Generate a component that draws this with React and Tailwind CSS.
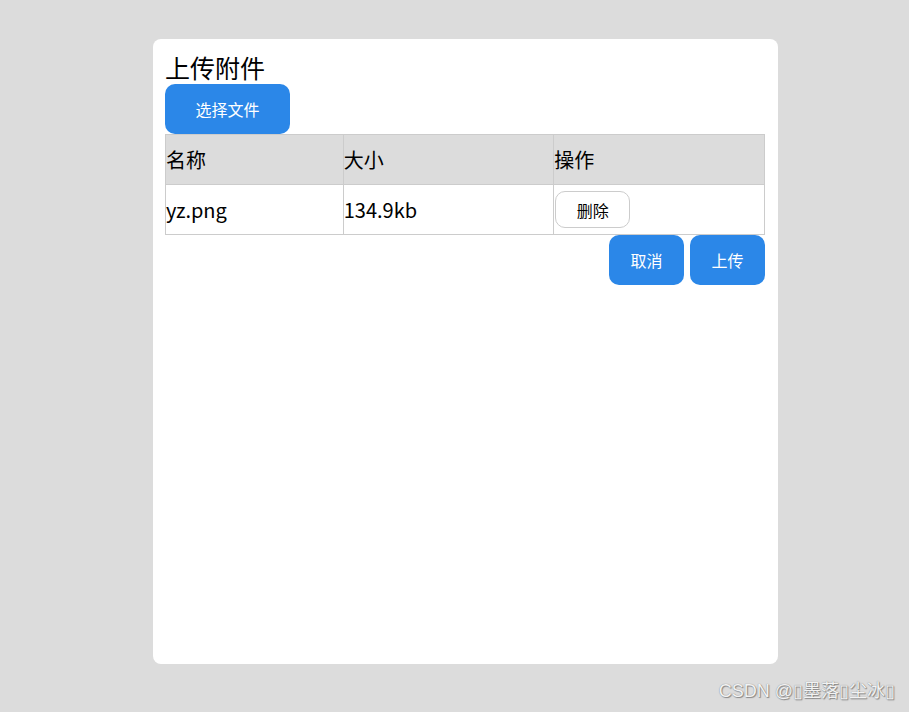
export default function App() {
  const font = { fontFamily: '"Noto Sans CJK SC", "Noto Sans", sans-serif' };
  return (
    <div className="relative w-[909px] h-[712px] bg-[#dcdcdc] overflow-hidden" style={font}>
      <div className="absolute left-[153px] top-[39px] w-[625px] h-[625px] bg-white rounded-[8px] pl-[12px] pr-[13px] py-[12px]">
        <div className="h-[33px] text-[25px] leading-[33px] text-black">上传附件</div>
        <button className="w-[125px] h-[50px] rounded-[10px] bg-[#2b87e8] text-white text-[16px]">
          选择文件
        </button>
        <table className="w-[600px] border-collapse text-[20px] text-black">
          <thead>
            <tr className="bg-[#dcdcdc] h-[50px]">
              <th className="w-[178px] border border-[#cccccc] text-left font-normal p-0">名称</th>
              <th className="w-[211px] border border-[#cccccc] text-left font-normal p-0">大小</th>
              <th className="w-[211px] border border-[#cccccc] text-left font-normal p-0">操作</th>
            </tr>
          </thead>
          <tbody>
            <tr className="h-[50px]">
              <td className="border border-[#cccccc] p-0">yz.png</td>
              <td className="border border-[#cccccc] p-0">134.9kb</td>
              <td className="border border-[#cccccc] p-0">
                <button className="ml-[1px] w-[75px] h-[37px] rounded-[10px] border border-[#cccccc] bg-white text-[16px] text-black">
                  删除
                </button>
              </td>
            </tr>
          </tbody>
        </table>
        <div className="flex justify-end gap-[6px]">
          <button className="w-[75px] h-[50px] rounded-[10px] bg-[#2b87e8] text-white text-[16px]">取消</button>
          <button className="w-[75px] h-[50px] rounded-[10px] bg-[#2b87e8] text-white text-[16px]">上传</button>
        </div>
      </div>
      <div
        className="absolute right-[14px] bottom-[7px] text-[18px] text-[#f2f2f2]"
        style={{ textShadow: "0 0 1px #777, 1px 1px 1px #888", fontFamily: '"Liberation Sans", "Noto Sans CJK SC", sans-serif' }}
      >
        CSDN @▯墨落▯尘冰▯
      </div>
    </div>
  );
}
